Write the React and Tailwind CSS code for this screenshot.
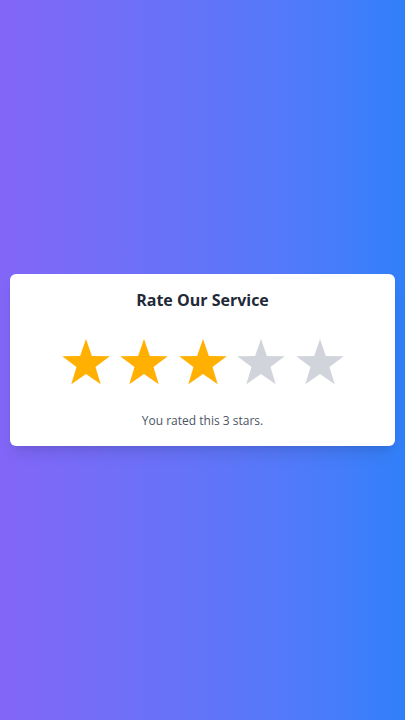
import React, { useState } from "react";

function Star({ filled, onClick }) {
  return (
    <button type="button" onClick={onClick} className="block w-[50px] h-[50px] p-0 bg-transparent border-0 cursor-pointer">
      <svg viewBox="0 0 50 50" width="50" height="50">
        <polygon
          points="25,2 30.88,18.91 48.78,19.27 34.51,30.09 39.7,47.23 25,37 10.3,47.23 15.49,30.09 1.22,19.27 19.12,18.91"
          fill={filled ? "#ffb000" : "#d1d5db"}
        />
      </svg>
    </button>
  );
}

export default function App() {
  const [rating, setRating] = useState(3);
  return (
    <div
      className="min-h-[720px] w-full flex items-center justify-center px-[10px] bg-gradient-to-r from-[#8266f8] to-[#2f80fa]"
      style={{ fontFamily: '"Open Sans", "Noto Sans", sans-serif' }}
    >
      <div className="w-full bg-white rounded-md shadow-lg pt-4 pb-[15px] px-4 flex flex-col items-center">
        <h1 className="text-[16px] leading-5 font-bold text-[#1f2937]">Rate Our Service</h1>
        <div className="flex gap-[8.5px] mt-[27px]">
          {[1, 2, 3, 4, 5].map((n) => (
            <Star key={n} filled={n <= rating} onClick={() => setRating(n)} />
          ))}
        </div>
        <p className="mt-[24px] text-[12px] leading-5 text-[#4b5563]">
          You rated this {rating} stars.
        </p>
      </div>
    </div>
  );
}
